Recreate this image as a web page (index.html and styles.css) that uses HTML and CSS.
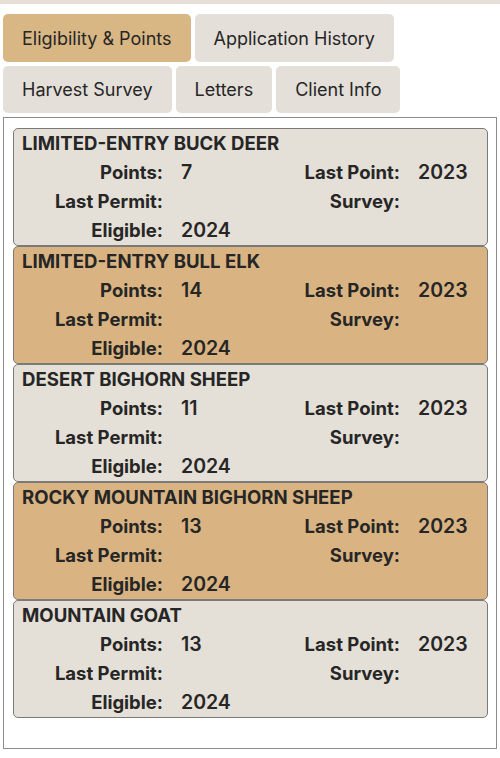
FILE: index.html
```html
<!DOCTYPE html>
<html lang="en">
<head>
    <meta charset="UTF-8">
    <meta name="viewport" content="width=device-width, initial-scale=1.0">
    <title>Eligibility &amp; Points</title>
    <link rel="stylesheet" href="styles.css">
</head>
<body>
    <div class="top-strip"></div>

    <div class="tabs">
        <div class="tab-row">
            <button class="tab active">Eligibility &amp; Points</button>
            <button class="tab">Application History</button>
        </div>
        <div class="tab-row">
            <button class="tab">Harvest Survey</button>
            <button class="tab">Letters</button>
            <button class="tab">Client Info</button>
        </div>
    </div>

    <div class="panel">
        <div class="species-card">
            <h3>LIMITED-ENTRY BUCK DEER</h3>
            <div class="stats">
                <span class="label">Points:</span><span class="value">7</span>
                <span class="label">Last Point:</span><span class="value">2023</span>
                <span class="label">Last Permit:</span><span class="value"></span>
                <span class="label">Survey:</span><span class="value"></span>
                <span class="label">Eligible:</span><span class="value">2024</span>
            </div>
        </div>

        <div class="species-card alt">
            <h3>LIMITED-ENTRY BULL ELK</h3>
            <div class="stats">
                <span class="label">Points:</span><span class="value">14</span>
                <span class="label">Last Point:</span><span class="value">2023</span>
                <span class="label">Last Permit:</span><span class="value"></span>
                <span class="label">Survey:</span><span class="value"></span>
                <span class="label">Eligible:</span><span class="value">2024</span>
            </div>
        </div>

        <div class="species-card">
            <h3>DESERT BIGHORN SHEEP</h3>
            <div class="stats">
                <span class="label">Points:</span><span class="value">11</span>
                <span class="label">Last Point:</span><span class="value">2023</span>
                <span class="label">Last Permit:</span><span class="value"></span>
                <span class="label">Survey:</span><span class="value"></span>
                <span class="label">Eligible:</span><span class="value">2024</span>
            </div>
        </div>

        <div class="species-card alt">
            <h3>ROCKY MOUNTAIN BIGHORN SHEEP</h3>
            <div class="stats">
                <span class="label">Points:</span><span class="value">13</span>
                <span class="label">Last Point:</span><span class="value">2023</span>
                <span class="label">Last Permit:</span><span class="value"></span>
                <span class="label">Survey:</span><span class="value"></span>
                <span class="label">Eligible:</span><span class="value">2024</span>
            </div>
        </div>

        <div class="species-card">
            <h3>MOUNTAIN GOAT</h3>
            <div class="stats">
                <span class="label">Points:</span><span class="value">13</span>
                <span class="label">Last Point:</span><span class="value">2023</span>
                <span class="label">Last Permit:</span><span class="value"></span>
                <span class="label">Survey:</span><span class="value"></span>
                <span class="label">Eligible:</span><span class="value">2024</span>
            </div>
        </div>
    </div>
</body>
</html>
```

FILE: styles.css
```css
* {
    margin: 0;
    padding: 0;
    box-sizing: border-box;
    font-family: Inter, "Noto Sans", Arial, sans-serif;
}

body {
    background-color: #ffffff;
    color: #262626;
    width: 500px;
}

.top-strip {
    height: 4px;
    background-color: #e6e0d8;
}

.tabs {
    display: flex;
    flex-direction: column;
    gap: 4px;
    padding: 10px 3px 0;
}

.tab-row {
    display: flex;
    gap: 4px;
}

.tab {
    height: 48px;
    padding: 0 19px;
    border: none;
    border-radius: 5px;
    background-color: #e4dfd8;
    color: #262626;
    font-size: 18px;
    cursor: pointer;
}

.tab-row + .tab-row .tab {
    height: 47px;
}

.tab.active {
    background-color: #d9b784;
}

.panel {
    margin: 4px 3px 10px;
    height: 632px;
    border: 1px solid #8c8c8c;
    padding: 10px 8px 0 9px;
    display: flex;
    flex-direction: column;
}

.species-card {
    height: 118px;
    border: 1px solid #7a7a7a;
    border-radius: 5px;
    background-color: #e4dfd7;
    padding: 3px 8px 0;
}

.species-card.alt {
    background-color: #d9b482;
}

.species-card h3 {
    font-size: 18.6px;
    font-weight: 700;
    line-height: 22px;
    margin-bottom: 3px;
}

.stats {
    display: grid;
    grid-template-columns: 141px 81px 120px 63px;
    column-gap: 18px;
    grid-auto-rows: 29px;
    align-items: center;
}

.label {
    font-size: 18.5px;
    font-weight: 700;
    text-align: right;
}

.value {
    font-size: 19.5px;
    font-weight: 600;
}
```
